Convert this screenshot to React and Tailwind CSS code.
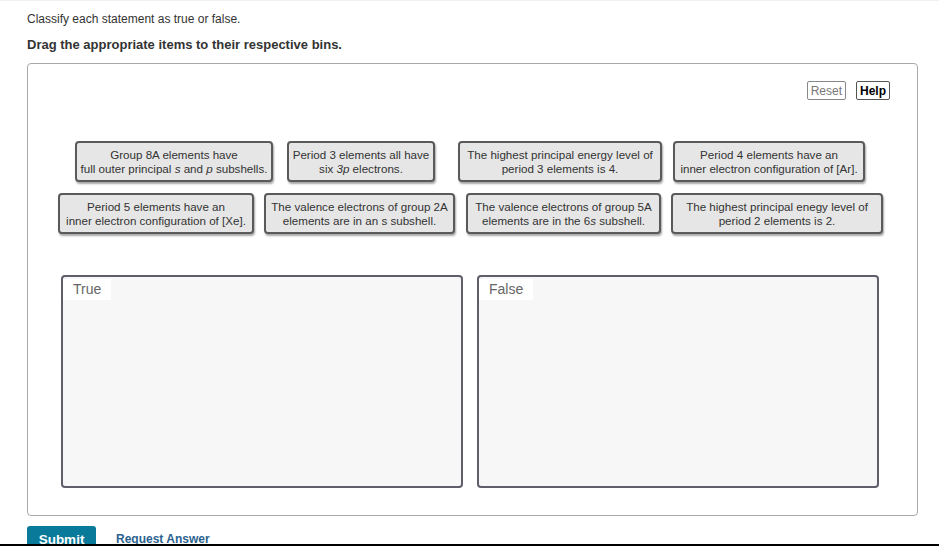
import React from 'react';

const font = { fontFamily: '"Liberation Sans", Arial, sans-serif' };

const Chip = ({ w, className = '', children }) => (
  <div
    className={`flex flex-col items-center justify-center h-[41px] rounded-[4px] border-2 border-[#5a5a5a] bg-[#e6e6e6] text-[11.6px] leading-[14px] text-[#333] text-center shadow-[1px_2px_2px_rgba(0,0,0,0.35)] ${w} ${className}`}
  >
    {children}
  </div>
);

const Bin = ({ label }) => (
  <div className="w-[402px] h-[213px] rounded-[4px] border-2 border-[#5f5f6b] bg-[#f7f7f7]">
    <div className="inline-block bg-white px-[10px] h-[21px] leading-[21px] text-[14px] text-[#666]">
      {label}
    </div>
  </div>
);

export default function App() {
  return (
    <div className="w-[939px] h-[546px] bg-white overflow-hidden relative" style={font}>
      <div className="h-px bg-[#f0f0f0]" />
      <div className="pl-[27px] pt-[11px]">
        <p className="text-[12px] text-[#333] leading-[14px]">Classify each statement as true or false.</p>
        <p className="mt-[11px] text-[13px] font-bold text-[#333] leading-[15px]">
          Drag the appropriate items to their respective bins.
        </p>
      </div>

      <div className="ml-[27px] mt-[11px] w-[891px] h-[453px] rounded-[4px] border border-[#aaa]">
        <div className="flex justify-end gap-[10px] pr-[27px] pt-[17px]">
          <button className="h-[19px] px-[3px] rounded-[2px] border border-[#888] text-[12px] text-[#777] leading-none">
            Reset
          </button>
          <button className="h-[19px] px-[3px] rounded-[2px] border border-[#555] text-[12px] font-bold text-black leading-none">
            Help
          </button>
        </div>

        <div className="flex mt-[41px] ml-[47px]">
          <Chip w="w-[198px]">
            <span>Group 8A elements have</span>
            <span>full outer principal <i>s</i> and <i>p</i> subshells.</span>
          </Chip>
          <Chip w="w-[148px]" className="ml-[14px]">
            <span>Period 3 elements all have</span>
            <span>six <i>3p</i> electrons.</span>
          </Chip>
          <Chip w="w-[204px]" className="ml-[23px]">
            <span>The highest principal energy level of</span>
            <span>period 3 elements is 4.</span>
          </Chip>
          <Chip w="w-[192px]" className="ml-[11px]">
            <span>Period 4 elements have an</span>
            <span>inner electron configuration of [Ar].</span>
          </Chip>
        </div>

        <div className="flex mt-[11px] ml-[30px]">
          <Chip w="w-[196px]">
            <span>Period 5 elements have an</span>
            <span>inner electron configuration of [Xe].</span>
          </Chip>
          <Chip w="w-[191px]" className="ml-[10px]">
            <span>The valence electrons of group 2A</span>
            <span>elements are in an s subshell.</span>
          </Chip>
          <Chip w="w-[195px]" className="ml-[11px]">
            <span>The valence electrons of group 5A</span>
            <span>elements are in the 6<i>s</i> subshell.</span>
          </Chip>
          <Chip w="w-[212px]" className="ml-[10px]">
            <span>The highest principal enegy level of</span>
            <span>period 2 elements is 2.</span>
          </Chip>
        </div>

        <div className="flex gap-[14px] ml-[33px] mt-[41px]">
          <Bin label="True" />
          <Bin label="False" />
        </div>
      </div>

      <div className="flex items-start ml-[27px] mt-[10px]">
        <button className="flex items-start justify-center w-[69px] h-[30px] rounded-t-[3px] bg-[#0a7a9a] text-white text-[13.5px] font-bold pt-[5px] leading-[18px]">
          Submit
        </button>
        <span className="ml-[20px] mt-[5px] text-[12px] font-bold text-[#2b6290] leading-[16px]">
          Request Answer
        </span>
      </div>

      <div className="absolute left-0 bottom-0 w-full h-[2px] bg-black" />
    </div>
  );
}
